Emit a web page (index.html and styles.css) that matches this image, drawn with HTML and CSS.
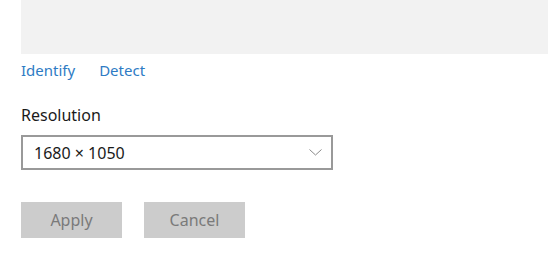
FILE: index.html
```html
<!DOCTYPE html>
<html>
<head>
<meta charset="utf-8">
<link rel="stylesheet" href="styles.css">
</head>
<body>
<div class="page">
  <div class="preview"></div>
  <div class="links">
    <a class="link">Identify</a>
    <a class="link">Detect</a>
  </div>
  <div class="label">Resolution</div>
  <div class="select">
    <span class="select-value">1680 × 1050</span>
    <svg class="chevron" width="13" height="7" viewBox="0 0 13 7"><path d="M0.5 0.5 L6.5 6 L12.5 0.5" fill="none" stroke="#8a8a8a" stroke-width="1"/></svg>
  </div>
  <div class="buttons">
    <div class="btn">Apply</div>
    <div class="btn">Cancel</div>
  </div>
</div>
</body>
</html>
```
FILE: styles.css
```css
html, body {
  margin: 0;
  padding: 0;
  background: #ffffff;
}
.page {
  padding-left: 21px;
  font-family: "Noto Sans", "Open Sans", sans-serif;
  font-size: 15px;
  display: flex;
  flex-direction: column;
  align-items: flex-start;
}
.preview {
  align-self: stretch;
  height: 54px;
  background: #f2f2f2;
}
.links {
  display: flex;
  gap: 24px;
  margin-top: 4px;
  height: 24px;
  line-height: 24px;
}
.link {
  color: #2e7bc4;
  cursor: pointer;
}
.label {
  margin-top: 22px;
  color: #1a1a1a;
  font-size: 16px;
  line-height: 22px;
}
.select {
  margin-top: 9px;
  box-sizing: border-box;
  width: 312px;
  height: 35px;
  border: 2px solid #999999;
  display: flex;
  align-items: center;
  justify-content: space-between;
  padding: 0 9px 0 11px;
  color: #1a1a1a;
  font-size: 16px;
}
.chevron {
  display: block;
}
.buttons {
  display: flex;
  gap: 22px;
  margin-top: 32px;
}
.btn {
  width: 101px;
  height: 36px;
  background: #cccccc;
  color: #7a7a7a;
  display: flex;
  align-items: center;
  justify-content: center;
  font-size: 16px;
}
```
